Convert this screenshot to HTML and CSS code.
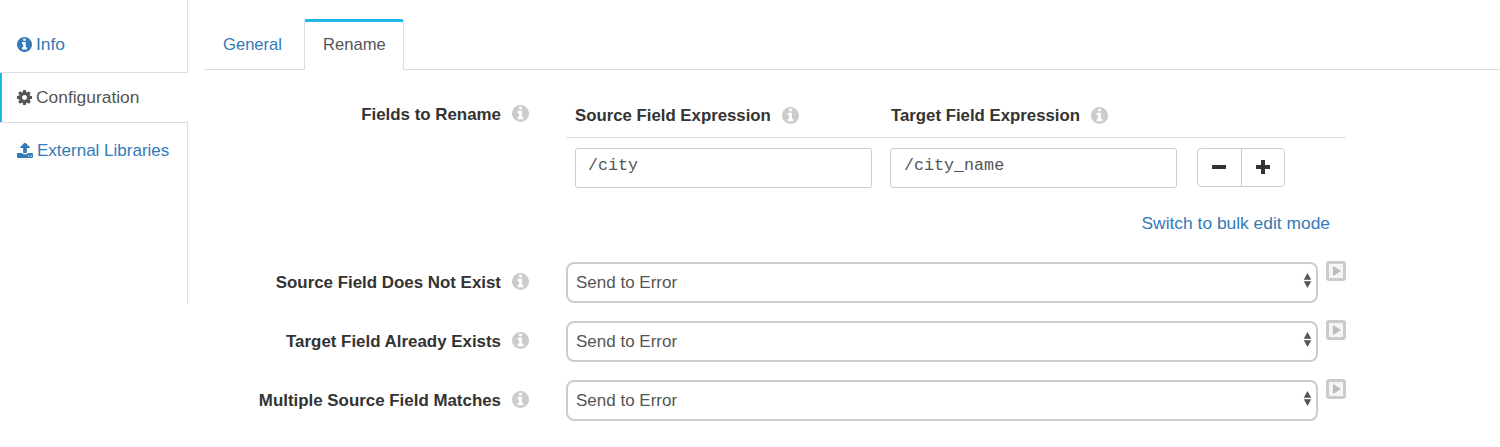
FILE: index.html
```html
<!DOCTYPE html>
<html lang="en">
<head>
    <meta charset="UTF-8">
    <title>Rename Configuration</title>
    <link rel="stylesheet" href="styles.css">
</head>
<body>
    <svg class="defs" width="0" height="0">
        <symbol id="info" viewBox="128 128 1536 1536"><path d="M1152 1376v-160q0-14-9-23t-23-9h-96v-512q0-14-9-23t-23-9h-320q-14 0-23 9t-9 23v160q0 14 9 23t23 9h96v320h-96q-14 0-23 9t-9 23v160q0 14 9 23t23 9h448q14 0 23-9t9-23zm-128-896v-160q0-14-9-23t-23-9h-192q-14 0-23 9t-9 23v160q0 14 9 23t23 9h192q14 0 23-9t9-23zm640 416q0 209-103 385.500t-279.500 279.500-385.500 103-385.500-103-279.500-279.500-103-385.500 103-385.500 279.500-279.500 385.500-103 385.500 103 279.500 279.500 103 385.500z"/></symbol>
        <symbol id="cog" viewBox="128 128 1536 1536"><path d="M1152 896q0-106-75-181t-181-75-181 75-75 181 75 181 181 75 181-75 75-181zm512-109v222q0 12-8 23t-20 13l-185 28q-19 54-39 91 35 50 107 138 10 12 10 25t-9 23q-27 37-99 108t-94 71q-12 0-26-9l-138-108q-44 23-91 38-16 136-29 186-7 28-36 28h-222q-14 0-24.500-8.500t-11.500-21.500l-28-184q-49-16-90-37l-141 107q-10 9-25 9-14 0-25-11-126-114-165-168-7-10-7-23 0-12 8-23 15-21 51-66.500t54-70.500q-27-50-41-99l-183-27q-13-2-21-12.500t-8-23.500v-222q0-12 8-23t19-13l186-28q14-46 39-92-40-57-107-138-10-12-10-24 0-10 9-23 26-36 98.500-107.500t94.500-71.500q13 0 26 10l138 107q44-23 91-38 16-136 29-186 7-28 36-28h222q14 0 24.500 8.500t11.500 21.500l28 184q49 16 90 37l142-107q9-9 24-9 13 0 25 10 129 119 165 170 7 8 7 22 0 12-8 23-15 21-51 66.500t-54 70.500q26 50 41 98l183 28q13 2 21 12.500t8 23.500z"/></symbol>
        <symbol id="upload" viewBox="64 128 1664 1536"><path d="M1344 1472q0-26-19-45t-45-19-45 19-19 45 19 45 45 19 45-19 19-45zm256 0q0-26-19-45t-45-19-45 19-19 45 19 45 45 19 45-19 19-45zm128-224v320q0 40-28 68t-68 28h-1472q-40 0-68-28t-28-68v-320q0-40 28-68t68-28h427q21 56 70.500 92t110.500 36h256q61 0 110.500-36t70.500-92h427q40 0 68 28t28 68zm-325-648q-17 40-59 40h-256v448q0 26-19 45t-45 19h-256q-26 0-45-19t-19-45v-448h-256q-42 0-59-40-17-39 14-69l448-448q18-19 45-19t45 19l448 448q31 30 14 69z"/></symbol>
        <symbol id="updown" viewBox="0 0 10 18"><path d="M5 0l4.500 8h-9zM5 18l-4.500-8h9z"/></symbol>
    </svg>

    <div class="page">
        <nav class="sidebar">
            <a class="side-item side-info"><svg class="side-icon"><use href="#info"/></svg>Info</a>
            <a class="side-item side-active"><svg class="side-icon"><use href="#cog"/></svg>Configuration</a>
            <a class="side-item side-ext"><svg class="side-icon side-icon-wide"><use href="#upload"/></svg>External Libraries</a>
        </nav>

        <main class="main">
            <div class="tabs">
                <a class="tab">General</a>
                <a class="tab tab-active">Rename</a>
            </div>

            <div class="form-row fields-row">
                <div class="label">Fields to Rename <svg class="help"><use href="#info"/></svg></div>
                <div class="fields">
                    <div class="fields-grid fields-head">
                        <div class="head-cell">Source Field Expression <svg class="help"><use href="#info"/></svg></div>
                        <div class="head-cell">Target Field Expression <svg class="help"><use href="#info"/></svg></div>
                    </div>
                    <div class="fields-grid fields-body">
                        <div class="body-cell"><input class="code-input input-source" value="/city"></div>
                        <div class="body-cell"><input class="code-input input-target" value="/city_name"></div>
                        <div class="body-cell">
                            <div class="btn-group">
                                <button class="btn">
                                    <svg width="14" height="14" viewBox="0 0 14 14"><rect y="5" width="14" height="4"/></svg>
                                </button>
                                <button class="btn">
                                    <svg width="14" height="14" viewBox="0 0 14 14"><path d="M5 0h4v5h5v4H9v5H5V9H0V5h5z"/></svg>
                                </button>
                            </div>
                        </div>
                    </div>
                    <a class="bulk-link">Switch to bulk edit mode</a>
                </div>
            </div>

            <div class="form-row select-row">
                <div class="label">Source Field Does Not Exist <svg class="help"><use href="#info"/></svg></div>
                <div class="select-wrap">
                    <select class="select"><option>Send to Error</option></select>
                    <svg class="select-arrows"><use href="#updown"/></svg>
                </div>
                <span class="run-btn"><span class="run-tri"></span></span>
            </div>
            <div class="form-row select-row">
                <div class="label">Target Field Already Exists <svg class="help"><use href="#info"/></svg></div>
                <div class="select-wrap">
                    <select class="select"><option>Send to Error</option></select>
                    <svg class="select-arrows"><use href="#updown"/></svg>
                </div>
                <span class="run-btn"><span class="run-tri"></span></span>
            </div>
            <div class="form-row select-row">
                <div class="label">Multiple Source Field Matches <svg class="help"><use href="#info"/></svg></div>
                <div class="select-wrap">
                    <select class="select"><option>Send to Error</option></select>
                    <svg class="select-arrows"><use href="#updown"/></svg>
                </div>
                <span class="run-btn"><span class="run-tri"></span></span>
            </div>
        </main>
    </div>
</body>
</html>
```

FILE: styles.css
```css
* {
    box-sizing: border-box;
}
html, body {
    margin: 0;
    padding: 0;
    background: #fff;
    overflow: hidden;
}
body {
    font-family: "Liberation Sans", Arial, sans-serif;
    font-size: 17px;
    color: #333;
}
.defs {
    display: block;
    height: 0;
}
.page {
    display: flex;
    width: 1500px;
    height: 447px;
}

/* left nav */
.sidebar {
    width: 188px;
    height: 303px;
    display: flex;
    flex-direction: column;
    flex: none;
}
.side-item {
    display: flex;
    align-items: center;
    padding-left: 17px;
    color: #337ab7;
    border-right: 1.5px solid #ddd;
}
.side-info {
    height: 73px;
    padding-top: 16px;
    font-size: 17.4px;
    border-bottom: 1.5px solid #ddd;
}
.side-active {
    height: 49px;
    padding-left: 15px;
    font-size: 17.4px;
    color: #555;
    border-right: none;
    border-left: 2px solid #1fb6e8;
}
.side-ext {
    height: 181px;
    align-items: flex-start;
    padding-top: 18px;
    border-top: 1.5px solid #ddd;
}
.side-icon {
    width: 15px;
    height: 15px;
    margin-right: 4px;
    fill: currentColor;
    flex: none;
}
.side-icon-wide {
    width: 16px;
    margin-top: 2px;
}

/* tabs */
.main {
    flex: 1;
    padding-left: 16px;
}
.tabs {
    display: flex;
    height: 70px;
    padding-top: 19px;
    font-size: 16.6px;
    border-bottom: 1.5px solid #ddd;
}
.tab {
    width: 100px;
    height: 51px;
    padding: 13px 19px 0 19px;
    color: #337ab7;
    line-height: 26px;
}
.tab-active {
    padding: 10px 0 0 18px;
    color: #555;
    background: #fff;
    border: 1.5px solid #ddd;
    border-top: 3px solid #1fb6e8;
    border-bottom: none;
    border-radius: 3px 3px 0 0;
}

/* form */
.form-row {
    display: grid;
    grid-template-columns: 362px 1fr;
}
.fields-row {
    margin-top: 24px;
    margin-bottom: 29px;
}
.select-row {
    grid-template-columns: 354px 752px 20px;
    column-gap: 8px;
    height: 41px;
    margin-bottom: 18px;
}
.label {
    width: 325px;
    height: 41px;
    display: flex;
    align-items: center;
    justify-content: flex-end;
    gap: 11px;
    font-size: 16.9px;
    font-weight: bold;
    white-space: nowrap;
}
.help {
    width: 17px;
    height: 17px;
    margin-top: -2px;
    fill: #ccc;
    flex: none;
}
.fields {
    width: 780px;
}
.fields-grid {
    display: grid;
    grid-template-columns: 316px 306px 1fr;
}
.fields-head {
    height: 44px;
    border-bottom: 1.5px solid #ddd;
}
.head-cell {
    padding-left: 9px;
    display: flex;
    align-items: center;
    gap: 11px;
    font-size: 16.8px;
    font-weight: bold;
    height: 43px;
}
.head-cell .help {
    margin-top: 0;
}
.fields-body {
    padding-top: 10px;
}
.body-cell {
    padding-left: 9px;
}
.code-input {
    display: block;
    height: 40px;
    padding: 0 12px 6px;
    font-family: "Liberation Mono", monospace;
    font-size: 16.7px;
    color: #555;
    border: 1.5px solid #ccc;
    border-radius: 3px;
    outline: none;
    background: #fff;
}
.input-source {
    width: 297px;
}
.input-target {
    width: 287px;
    margin-left: -1px;
    padding-left: 13px;
}
.btn-group {
    display: flex;
    width: 88px;
    height: 39px;
    border: 1.5px solid #ccc;
    border-radius: 4px;
}
.btn {
    flex: 1;
    padding: 0 0 2px;
    display: flex;
    align-items: center;
    justify-content: center;
    background: #fff;
    border: none;
    border-radius: 4px;
}
.btn + .btn {
    border-left: 1.5px solid #ccc;
    border-radius: 0 4px 4px 0;
}
.btn svg {
    fill: #333;
}
.bulk-link {
    display: block;
    margin-top: 25px;
    padding-right: 16px;
    height: 20px;
    line-height: 20px;
    font-size: 17.4px;
    text-align: right;
    color: #337ab7;
}

/* selects */
.select-wrap {
    position: relative;
    height: 41px;
}
.select {
    display: block;
    width: 100%;
    height: 40.5px;
    padding: 0 8px;
    appearance: none;
    font-family: "Liberation Sans", Arial, sans-serif;
    font-size: 17px;
    color: #555;
    background: #fff;
    border: 2px solid #ccc;
    border-radius: 8px;
    outline: none;
}
.select-arrows {
    position: absolute;
    right: 6px;
    top: 11px;
    width: 9px;
    height: 15px;
    fill: #555;
}
.run-btn {
    width: 20px;
    height: 20px;
    margin-top: -1px;
    display: flex;
    align-items: center;
    justify-content: center;
    border: 3px solid #ccc;
    border-radius: 3px;
    background: #f5f5f5;
}
.run-tri {
    width: 0;
    height: 0;
    margin-left: 2px;
    border-left: 8px solid #bbb;
    border-top: 5px solid transparent;
    border-bottom: 5px solid transparent;
}
```
